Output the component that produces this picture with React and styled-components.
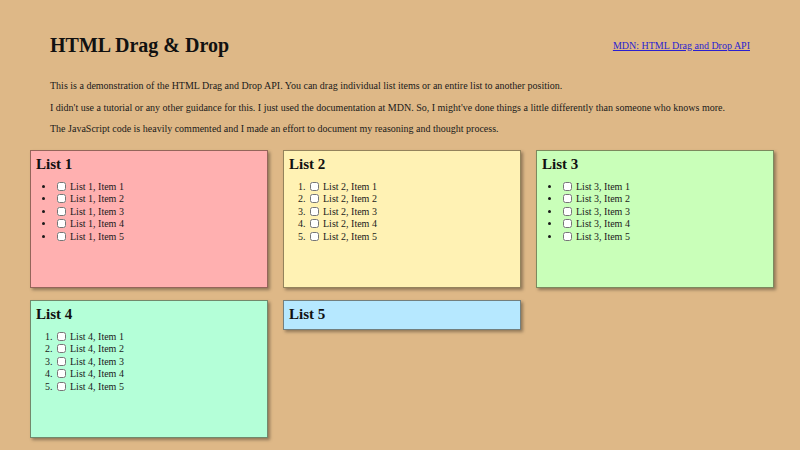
import React from "react";
import styled, { createGlobalStyle } from "styled-components";

const GlobalStyle = createGlobalStyle`
  body {
    margin: 0;
    background: #deb887;
    font-family: "Liberation Serif", "Times New Roman", serif;
    font-size: 10px;
    color: #1a1a1a;
  }
`;

const Page = styled.div`
  padding: 0 0 12px;
`;

const Header = styled.header`
  display: flex;
  justify-content: space-between;
  align-items: center;
  padding: 30px 50px 0;
`;

const Title = styled.h1`
  margin: 0;
  font-size: 20px;
  line-height: 30px;
  color: #111;
`;

const DocLink = styled.a`
  color: #2a1fd0;
  font-size: 10px;
`;

const Intro = styled.div`
  padding: 19px 50px 0;
`;

const Text = styled.p`
  margin: 0 0 8.5px;
  line-height: 13px;
`;

const Board = styled.div`
  display: grid;
  grid-template-columns: repeat(3, 238px);
  column-gap: 15px;
  row-gap: 12px;
  align-items: start;
  padding: 6px 0 0 30px;
`;

const Card = styled.section`
  box-sizing: border-box;
  background: ${({ color }) => color};
  border: 1px solid rgba(60, 40, 20, 0.55);
  box-shadow: 2px 2px 3px rgba(0, 0, 0, 0.35);
  padding: 5px 5px 6px;
`;

const CardTitle = styled.h2`
  margin: 0;
  font-size: 15px;
  line-height: 17px;
  color: #111;
`;

const ListBody = styled.ul`
  margin: 8px 0 0;
  padding-left: 19px;
  min-height: 100px;
  list-style: ${({ as }) => (as === "ol" ? "decimal" : "disc")};
`;

const Item = styled.li`
  line-height: 12.5px;
`;

const Check = styled.input`
  width: 9px;
  height: 9px;
  margin: 0 4px 0 2px;
  vertical-align: -1px;
`;

const lists = [
  { id: 1, color: "#ffb0b0", ordered: false, items: 5 },
  { id: 2, color: "#fff2b4", ordered: true, items: 5 },
  { id: 3, color: "#c9ffb9", ordered: false, items: 5 },
  { id: 4, color: "#b4ffd8", ordered: true, items: 5 },
  { id: 5, color: "#b6e8ff", ordered: false, items: 0 },
];

function List({ list }) {
  const entries = Array.from({ length: list.items }, (_, i) => i + 1);

  return (
    <Card color={list.color}>
      <CardTitle>List {list.id}</CardTitle>
      {entries.length > 0 && (
        <ListBody as={list.ordered ? "ol" : "ul"}>
          {entries.map((n) => (
            <Item key={n}>
              <Check type="checkbox" />
              List {list.id}, Item {n}
            </Item>
          ))}
        </ListBody>
      )}
    </Card>
  );
}

export default function App() {
  return (
    <Page>
      <GlobalStyle />
      <Header>
        <Title>HTML Drag &amp; Drop</Title>
        <DocLink href="#">MDN: HTML Drag and Drop API</DocLink>
      </Header>
      <Intro>
        <Text>
          This is a demonstration of the HTML Drag and Drop API. You can drag individual list items or an entire list
          to another position.
        </Text>
        <Text>
          I didn't use a tutorial or any other guidance for this. I just used the documentation at MDN. So, I might've
          done things a little differently than someone who knows more.
        </Text>
        <Text>The JavaScript code is heavily commented and I made an effort to document my reasoning and thought process.</Text>
      </Intro>
      <Board>
        {lists.map((list) => (
          <List key={list.id} list={list} />
        ))}
      </Board>
    </Page>
  );
}
